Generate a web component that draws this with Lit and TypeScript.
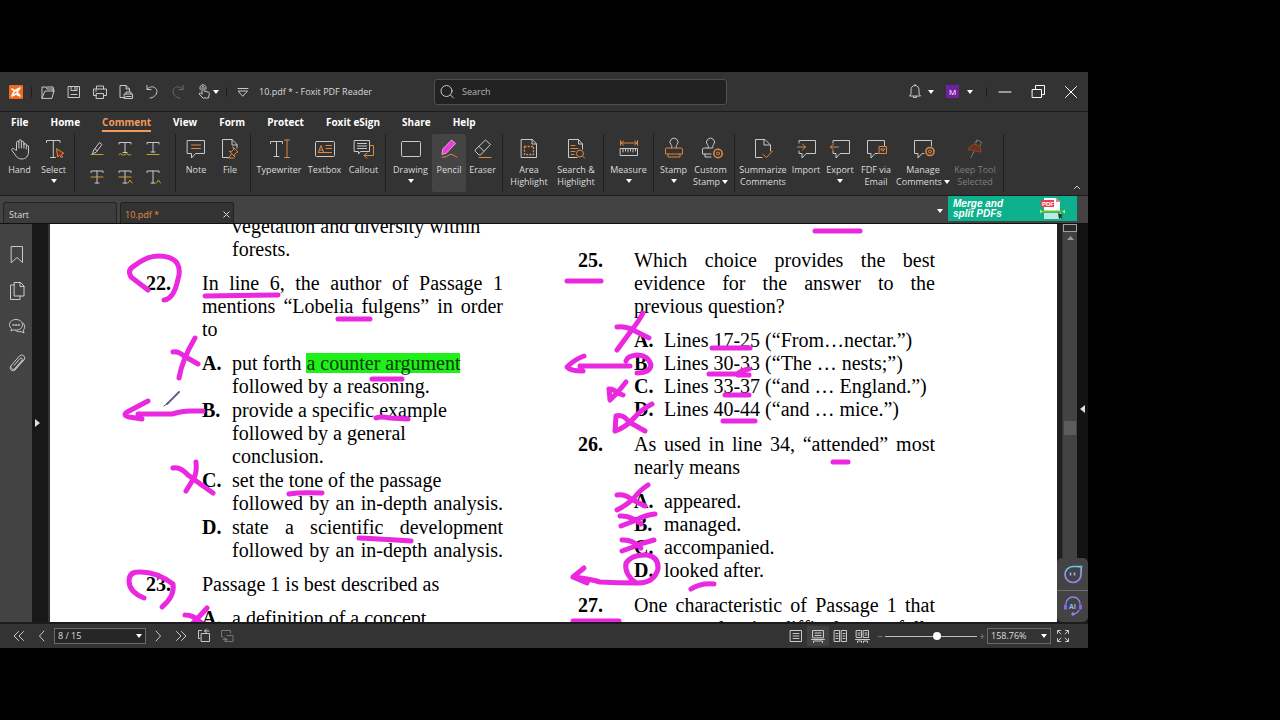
import { LitElement, html, css, svg, nothing } from "lit";
import { customElement } from "lit/decorators.js";

const G = "#c9c9c9";
const O = "#e0873f";
const Y = "#c9a227";

const ICONS: Record<string, any> = {
  logo: svg`<rect x="5" y="5" width="14" height="14" rx="1" fill="#f26b1d" stroke="none"/><path d="M8 16c1-4 3-6 8-8M8 9l3 2 5-3-3 4 3 4-4-2-4 2" stroke="#fff" stroke-width="1.6"/>`,
  open: svg`<path d="M6 18V7h4l1 2h6v2M6 18l3-7h9l-2 7zM11 7h6l1 4"/>`,
  save: svg`<path d="M6.500 6.500h11v11h-11zM9 6.500v4h6v-4M13 7v2.500M9 14.500h6"/>`,
  print: svg`<path d="M8.500 9V6h7v3M8.500 15.500h-3v-6.500h13v6.500h-3M8.500 13.500h7v5h-7zM7.500 11h1"/>`,
  docprint: svg`<path d="M11 17.500H6v-12h6l3.500 3.500v2.500M12 5.500V9h3.500M12 14v-2h5v2M10.500 14h8v4.500h-8zM12 16.500h5"/>`,
  undo: svg`<path d="M7 5.500v4h4M7 9.500c2-2.500 5-3.500 7.500-2 3.500 2 3 6.500 0 8.500-1.500 1.500-3 2-4.500 2"/>`,
  redo: svg`<g stroke="#6b6b6b"><path d="M17 5.500v4h-4M17 9.500c-2-2.500-5-3.500-7.500-2-3.500 2-3 6.500 0 8.500 1.500 1.500 3 2 4.500 2"/></g>`,
  touch: svg`<path d="M10 14V7.500a1 1 0 0 1 2 0V11l4.500 1.200c1 .3 1 1 .8 2l-.8 3.800h-5.500l-4-4c0-1.500 2-1.200 3 0M8.200 9.500a3.200 3.200 0 1 1 5.600 0"/>`,
  ribbon: svg`<path d="M7 8.500h10M7.500 11h9L12 16z"/>`,
  search: svg`<circle cx="11.500" cy="11" r="5.500"/><path d="m15.500 15 3 3"/>`,
  bell: svg`<path d="M12 5.500c-2.800 0-4 2-4 4.500v4l-1.500 2h11L16 14v-4c0-2.500-1.200-4.500-4-4.500zM10.500 16.500v1h3v-1M12 4.500v1"/>`,
  min: svg`<path d="M6 12h12"/>`,
  restore: svg`<path d="M6.500 9.500h9v8h-9zM9.500 9.500v-4h9v9h-3"/>`,
  close: svg`<path d="m6.500 6.500 11 11m0-11-11 11"/>`,
  hand: svg`<path d="M8.500 13V5.500c0-1.700 2.400-1.700 2.400 0V4c0-1.700 2.500-1.700 2.500 0v1.500c0-1.700 2.500-1.700 2.500 0v2.300c0-1.600 2.400-1.600 2.400 0L20.500 9v6c0 4-2.500 7-6.500 7s-5.500-2-7-4.500L4 13.500c-1-2 1-3 2.300-1.500zM10.900 5.500V11M13.400 5v6M15.900 6v5M18.300 8.500V12"/>`,
  select: svg`<path d="M4.500 5.500V3.500H18v2M11.300 3.500v17M8.500 20.500h5"/><path d="m14.500 12 1.200 8 2-1.800 1.600 2.600 1.400-.8-1.500-2.600 2.300-.9z" stroke="${O}" fill="#7a2d14"/>`,
  hl: svg`<path d="m8.500 14.500-1 3 3.500-1 6-8-2.500-2-6 8zM10 13l2.500 1.800"/><path d="M6 18.500h12" stroke="${Y}"/>`,
  squig: svg`<path d="M6 8V6.500h12V8M12 6.500v10M10 16.500h4"/><path d="M6 18.500q1.500-1.500 3 0t3 0 3 0 3 0" stroke="${Y}"/>`,
  under: svg`<path d="M6 8V6.500h12V8M12 6.500v9.500M10 16h4"/><path d="M6 18.500h12" stroke="${Y}"/>`,
  strike: svg`<path d="M6 7.500V6h12v1.500M12 6v12M10 18h4"/><path d="M6 12h12" stroke="${Y}"/>`,
  replace: svg`<path d="M6 7.500V6h12v1.500M12 6v12M10 18h4"/><path d="M6 12h12" stroke="${Y}"/><path d="m15 18 2-3 2 3" stroke="${Y}"/>`,
  insert: svg`<path d="M6 7.500V6h12v1.500M12 6v12M10 18h4"/><path d="m15.500 18 2-3 2 3" stroke="${Y}"/>`,
  note: svg`<path d="M3.500 3.500h17v13h-9l-4 4.500v-4.500h-4z"/><path d="M7.500 8h9M7.500 11.500h9" stroke="${O}"/>`,
  file: svg`<path d="M11 20.500H4.500v-18H14l5 5V11M14 2.500V8h5"/><path d="m15 10 5 5-1.500.5-2 2 .3 2.200-5.500-5.500 2.200.3 2-2zM13.500 17l-3 4M16 21h-5" stroke="${O}"/>`,
  type: svg`<path d="M3.500 6.500v-2h12v2M9.500 4.500v15M7 19.500h5"/><path d="M17.500 3h5M20 3v17.500M17.500 20.500h5" stroke="${O}"/>`,
  textbox: svg`<rect x="2.500" y="4.500" width="19" height="15" rx="1"/><path d="m5.500 15 2.500-6.500 2.500 6.500M6.500 13h3M13 8.500h5.500M13 11.500h5.500M5.500 15.500h13" stroke="${O}"/>`,
  callout: svg`<path d="M2.500 3.500h15v11h-9l-2 2.500v-2.500h-4zM5.500 6.500h9M5.500 9h9M5.500 11.500h9"/><path d="M18 8.500h3.500v10H12m3-2.500-3 2.500 3 2.500" stroke="${O}"/>`,
  drawing: svg`<rect x="2.500" y="4.500" width="19" height="15" rx="1"/>`,
  pencil: svg`<path d="m5 17 .8-5L14.500 3l4 3.500-9 9.500z" fill="#ee3ad8" stroke="#e9a7e2"/><path d="M5 20c5 1 6-2.500 9-2.500s3 2 6 2.500" stroke="${O}"/>`,
  eraser: svg`<path d="m4.500 12.500 10-9.500 5 4.500-10 10.500H8l-3.500-3.500zM8 9.500l5 4.800"/><path d="M8 20.500h12" stroke="${O}"/>`,
  area: svg`<path d="M4.500 2.500h11l4 4.500v13.500h-15zM15 2.500V7h4.500"/><rect x="7.500" y="9.500" width="9" height="8" stroke="${O}" stroke-width="1.400" stroke-linecap="butt" stroke-dasharray="2 1.200"/>`,
  searchhl: svg`<path d="M13 20.500H4.500v-18h10l4 4.500v5M14.500 2.500V7h4"/><path d="M7 8.500h4M7 11.500h7M7 14.500h4M7 17.500h3" stroke="${O}"/><circle cx="16" cy="16.500" r="3.500" stroke="${O}"/><path d="m18.500 19 2 2" stroke="${O}"/>`,
  measure: svg`<path d="M3.500 3.500v5M20.500 3.500v5M4 6h16M6.500 4 4 6l2.500 2M17.500 4 20 6l-2.500 2" stroke="${O}"/><rect x="3.500" y="11.500" width="17" height="7"/><path d="M6 12v3M8.500 12v2M11 12v3M13.500 12v2M16 12v3M18.500 12v2"/>`,
  stamp: svg`<path d="M9.500 11c.5-1.500.5-2-.5-3.200a4 4 0 1 1 6 0c-1 1.200-1 1.700-.5 3.200"/><path d="M4.500 11h15l1 1v5h-17v-5zM6 17v3h12v-3" stroke="${O}"/>`,
  custom: svg`<path d="M9 11c.5-1.500.5-2-.5-3.200a4 4 0 1 1 6 0c-1 1.200-1 1.700-.5 3.200M13 11H4.500l-1 1v5H12M6 17v3h6"/><circle cx="19" cy="16.500" r="4.200" stroke="${O}" stroke-width="1.600"/><circle cx="19" cy="16.500" r="1.500" stroke="${O}"/>`,
  summ: svg`<path d="M11 20.500H4.500v-18H14l5.500 5.500v6M13 2.500v5.500h6"/><path d="m12 17.500 3.500 3 6-6.500" stroke="${O}"/>`,
  imp: svg`<path d="M5 6V3.500h16.500v13H12L8 21v-4.500H5V14"/><path d="M3.500 10h8M8.500 7l3 3-3 3" stroke="${O}"/>`,
  exp: svg`<path d="M5 6V3.500h16.500v13H12L8 21v-4.500H5V14"/><path d="M2.500 10h8M5.500 7l-3 3 3 3" stroke="${O}"/>`,
  fdf: svg`<path d="M14 16.500h-3L7 21v-4.500H3.500v-13h17V9"/><path d="M15.500 9.500h7v7h-7zM17 12h4l-2 2z" stroke="${O}"/>`,
  manage: svg`<path d="M13 16.500h-2L7 21v-4.500H3.500v-13h17V9"/><circle cx="19" cy="14.500" r="4" stroke="${O}" stroke-width="1.600"/><circle cx="19" cy="14.500" r="1.500" stroke="${O}"/>`,
  keep: svg`<path d="M11.500 6.500 14 3l4.500 2-1.500 4M8 20.500l3-6M14 3l-.5 2.500" stroke="#777"/><path d="M5 12.500c2-4 5-5.500 8-5s5.500 3.500 5 7.500l-3.500-.5-2.500-1-2.500-.5z" stroke="#8a4a28" fill="#6a3218"/>`,
  bookmark: svg`<path d="M6.500 3.500h11v16L12 14.500l-5.500 5z"/>`,
  pages: svg`<path d="M9.500 3.500h6l3.500 3.500v10H9.500zM15 3.500V7.500h4M9.500 6h-4v14.500h9.500V17"/>`,
  chat: svg`<path d="M11 4.500c-4 0-6.500 2.300-6.500 5.200 0 1.600.8 3 2 4L6 16l2.500-1.200c4.500 1.200 9-1 9-5.100 0-2.900-2.500-5.200-6.500-5.200zM18 8c3 3 1.500 6 .3 7l.7 3-3-1.500c-2.500.7-4.500 0-5.500-1.200"/><path d="M8 10h1M10.700 10h1M13.400 10h1" stroke-width="1.500"/>`,
  clip: svg`<path d="m17.500 9.500-7 8a2.600 2.600 0 0 1-4-3.500l8-9a3 3 0 0 1 4.500 4M9 14.500l6-7a1.300 1.300 0 0 1 2 1.700L9.500 18M5.500 15.500c-1.500 3 1.500 5.500 4.500 3.500l9-10"/>`,
  first: svg`<path d="m11.500 7.500-4.500 4.500 4.500 4.500M16.500 7.500 12 12l4.500 4.500"/>`,
  prev: svg`<path d="m14 7-4.500 5 4.500 5"/>`,
  next: svg`<path d="m10 7 4.500 5-4.500 5"/>`,
  last: svg`<path d="m7.500 7.500 4.500 4.500-4.500 4.500M12.500 7.500l4.500 4.500-4.500 4.500"/>`,
  back: svg`<path d="M9.500 9.500h8v8h-8zM8 14.500H6.500v-8h3M17 7h-4.500M14.500 5l-2 2 2 2"/>`,
  fwd: svg`<g stroke="#777"><path d="M12 11.500h6v6h-8v-3M8 13H6.500V6.500h9V9M8 15.500h4m-2-2 2 2-2 2"/></g>`,
  single: svg`<path d="M6.500 6.500h11v11h-11zM9 9.500h6M9 12h6M9 14.500h6"/>`,
  cont: svg`<path d="M6.500 13.500v-7h11v7zM9 9h6M9 11.500h6M5.500 15.500h13M7.500 18.500v-1.500h9v1.500"/>`,
  facing: svg`<path d="M6.500 6.500h5v11h-5zM13.500 6.500h5v11h-5zM8 9.500h2M8 12h2M8 14.500h2M15 9.500h2M15 12h2M15 14.500h2"/>`,
  contfacing: svg`<path d="M6.500 6.500h5v7h-5zM13.500 6.500h5v7h-5zM8 9h2M8 11h2M15 9h2M15 11h2M5.500 15.500h14M7.500 18.500v-1.500h4v1.500M13.500 18.500v-1.500h4v1.500"/>`,
  full: svg`<path d="M9.500 6.500h-3v3M6.500 6.500 10 10M14.500 6.500h3v3M17.500 6.500 14 10M9.500 17.500h-3v-3M6.500 17.500 10 14M14.500 17.500h3v-3M17.500 17.500 14 14"/>`,
};

const icon = (name: string) => html`<svg class="icon" viewBox="0 0 24 24" width="24" height="24" aria-hidden="true"
  fill="none" stroke=${G} stroke-width="1" stroke-linejoin="round" stroke-linecap="round">${ICONS[name]}</svg>`;

const caret = html`<svg class="caret" viewBox="0 0 6 4" width="6" height="4" aria-hidden="true"><path d="M0 0h6L3 4z" fill="#fff"/></svg>`;

type Tool = { i: string; l: string[]; w: number; c?: boolean; on?: boolean; off?: boolean };
const GROUPS: (Tool[] | "marks")[] = [
  [{ i: "hand", l: ["Hand"], w: 33 }, { i: "select", l: ["Select"], w: 35, c: true }],
  "marks",
  [{ i: "note", l: ["Note"], w: 34 }, { i: "file", l: ["File"], w: 34 }],
  [{ i: "type", l: ["Typewriter"], w: 50 }, { i: "textbox", l: ["Textbox"], w: 41 }, { i: "callout", l: ["Callout"], w: 37 }],
  [{ i: "drawing", l: ["Drawing"], w: 43, c: true }, { i: "pencil", l: ["Pencil"], w: 34, on: true }, { i: "eraser", l: ["Eraser"], w: 33 }],
  [{ i: "area", l: ["Area", "Highlight"], w: 46 }, { i: "searchhl", l: ["Search &", "Highlight"], w: 48 }],
  [{ i: "measure", l: ["Measure"], w: 43, c: true }],
  [{ i: "stamp", l: ["Stamp"], w: 33, c: true }, { i: "custom", l: ["Custom", "Stamp"], w: 41, c: true }],
  [
    { i: "summ", l: ["Summarize", "Comments"], w: 50 },
    { i: "imp", l: ["Import"], w: 36 },
    { i: "exp", l: ["Export"], w: 32, c: true },
    { i: "fdf", l: ["FDF via", "Email"], w: 40 },
    { i: "manage", l: ["Manage", "Comments"], w: 54, c: true },
    { i: "keep", l: ["Keep Tool", "Selected"], w: 50, off: true },
  ],
];

type Question = { n?: string; stem?: any[]; opts: { k?: string; t: any[] }[] };

const j = (s: string) => ({ j: s });
const LEFT: Question[] = [
  { opts: [{ t: ["vegetation and diversity within", "forests."] }] },
  {
    n: "22.",
    stem: [j("In line 6, the author of Passage 1"), j("mentions “Lobelia fulgens” in order"), "to"],
    opts: [
      { k: "A.", t: [html`put forth <mark>a counter argument</mark>`, "followed by a reasoning."] },
      { k: "B.", t: ["provide a specific example", "followed by a general", "conclusion."] },
      { k: "C.", t: ["set the tone of the passage", j("followed by an in-depth analysis.")] },
      { k: "D.", t: [j("state a scientific development"), j("followed by an in-depth analysis.")] },
    ],
  },
  { n: "23.", stem: ["Passage 1 is best described as"], opts: [{ k: "A.", t: ["a definition of a concept."] }] },
];
const RIGHT: Question[] = [
  { opts: [{ t: ["simple terms."] }] },
  {
    n: "25.",
    stem: [j("Which choice provides the best"), j("evidence for the answer to the"), "previous question?"],
    opts: [
      { k: "A.", t: ["Lines 17-25 (“From…nectar.”)"] },
      { k: "B.", t: ["Lines 30-33 (“The … nests;”)"] },
      { k: "C.", t: ["Lines 33-37 (“and … England.”)"] },
      { k: "D.", t: ["Lines 40-44 (“and … mice.”)"] },
    ],
  },
  {
    n: "26.",
    stem: [j("As used in line 34, “attended” most"), "nearly means"],
    opts: [
      { k: "A.", t: ["appeared."] },
      { k: "B.", t: ["managed."] },
      { k: "C.", t: ["accompanied."] },
      { k: "D.", t: ["looked after."] },
    ],
  },
  { n: "27.", stem: [j("One characteristic of Passage 1 that"), j("can people it difficult to fully")], opts: [] },
];

const INK = [
  "M148 290 L131 277Q127 270 134 266Q147 256 158 256Q172 256 177 263Q181 270 178 279Q174 299 164 300",
  "M205 296L278 295", "M195 338Q182 360 179 378M173 352Q178 351 184 356L198 364",
  "M203 411H190Q182 411 172 414H138M148 401L129 411Q121 415 129 417L142 419",
  "M338 319H370", "M372 379H402", "M376 418Q380 416 390 418L408 419",
  "M815 231H860", "M567 281H601", "M643 313Q639 321 631 331L617 350M617 327Q626 326 633 330L649 338",
  "M712 348H750", "M580 366H630M626 361Q627 356 637 355Q648 355 651 365Q650 373 637 373M584 356Q575 359 567 367Q570 371 583 371",
  "M709 374H737Q742 370 749 369M738 375H749", "M725 395H749", "M723 421H755",
  "M626 382L618 392L610 400L609 389Q614 389 617 393L623 395",
  "M652 404Q642 409 634 418Q625 428 615 431L616 416Q623 414 629 422L645 431",
  "M833 462H848", "M648 485Q640 490 634 498Q627 505 617 510M617 495Q625 494 631 499L645 506",
  "M655 514Q645 515 634 521L621 526M620 516Q630 515 641 524",
  "M654 540Q642 543 633 547L622 551M622 540Q632 539 641 548",
  "M636 583Q624 574 626 563Q632 554 647 555Q659 557 658 569Q654 583 638 583Q618 583 600 582Q590 579 573 577L584 568M573 577L587 583",
  "M691 589Q700 583 714 584", "M573 621H619",
  "M196 462Q197 472 194 478L186 491M173 468Q180 466 188 475Q200 484 213 493",
  "M289 494Q300 492 322 493", "M359 538Q380 539 411 541",
  "M144 598Q129 592 129 581Q129 572 138 572Q156 571 173 584Q175 596 162 607",
  "M207 608Q200 616 188 628M185 615Q194 615 200 622L213 629",
];

const line = (l: any) => (l && l.j ? html`<span class="line full">${l.j}</span>` : html`<span class="line">${l}</span>`);

const question = (q: Question) => html`<section class="q">
  ${q.stem ? html`<div class="stem"><b>${q.n}</b><p>${q.stem.map(line)}</p></div>` : nothing}
  ${q.opts.length
    ? html`<div class="opts">${q.opts.map((o) => html`<div class="opt"><b>${o.k ?? nothing}</b><p>${o.t.map(line)}</p></div>`)}</div>`
    : nothing}
</section>`;

@customElement("app-root")
export class AppRoot extends LitElement {
  static styles = css`
    :host { display: block; min-height: 100vh; background: #000; box-sizing: border-box; padding: 10vh 15% 10vh 0;
      font: 9px/12px "Open Sans", "Noto Sans", sans-serif; color: #dcdcdc; }
    * { box-sizing: border-box; }
    button, input, select { font: inherit; color: inherit; background: none; border: 0; margin: 0; padding: 0; border-radius: 0; outline: none; }
    svg { display: block; flex: none; }
    .window { display: flex; flex-direction: column; height: 80vh; background: #333; overflow: hidden; }
    .title { display: grid; grid-template-columns: 434fr 293fr 361fr; align-items: center; height: 40px; border-bottom: 1px solid #1c1c1c; flex: none; }
    .quick { display: flex; align-items: center; padding-left: 4px; white-space: nowrap; }
    .quick > .caret { margin: 0 4px 0 -4px; }
    .ib { display: flex; align-items: center; justify-content: center; width: 26px; height: 26px; }
    .bar { width: 1px; height: 10px; background: #1c1c1c; margin: 0 3px; flex: none; }
    .bar.sysbar { margin: 0 1px 0 13px; }
    .name { padding-left: 3px; }
    .search { display: flex; align-items: center; height: 26px; border: 1px solid #505050; border-radius: 3px; background: #222; }
    .search input { flex: 1; min-width: 0; padding-left: 3px; }
    .search input::placeholder { color: #b4b4b4; opacity: 1; }
    .sys { display: flex; align-items: center; justify-content: flex-end; padding-right: 1px; }
    .avatar { width: 13px; height: 13px; background: #7121a0; color: #fff; font-size: 8px; line-height: 13px; text-align: center; margin: 0 8px 0 12px; }
    .wide { width: 33px; }
    .wide svg { stroke: #fff; }
    .menu { display: flex; gap: 22px; height: 22px; padding: 0 0 0 11px; align-items: center; flex: none; font-size: 10px; font-weight: 700; color: #fff; }
    .menu button { height: 18px; line-height: 16px; border-bottom: 2px solid transparent; white-space: nowrap; }
    .menu button.on { color: #f19a5b; border-color: #f19a5b; }
    .ribbon { display: flex; height: 62px; padding-bottom: 3px; border-bottom: 1px solid #1c1c1c; flex: none; }
    .group { display: flex; padding: 0 3px; border-right: 1px solid #1f1f1f; }
    .marks { display: grid; grid-template-columns: repeat(3, 28px); padding: 0 8px; }
    .marks button { display: flex; align-items: center; justify-content: center; height: 28px; }
    .tool { display: flex; flex-direction: column; align-items: center; padding-top: 3px; line-height: 12px; white-space: nowrap; border-radius: 2px; }
    .tool svg.icon { margin-bottom: 3px; }
    .tool span { display: flex; align-items: center; gap: 2px; }
    .tool > .caret { margin-top: 3px; }
    .tool.on { background: #444; }
    .tool:disabled { color: #7c7c7c; }
    .fold { margin: auto 8px 3px auto; }
    .tabs { display: flex; height: 28px; background: #434343; border-bottom: 1px solid #111; padding: 0 11px 0 3px; flex: none; }
    .tab { display: flex; align-items: center; justify-content: space-between; width: 114px; height: 21px; margin: 6px 3px 0 0; padding: 3px 3px 0 5px;
      border: 1px solid #222; border-bottom: 0; border-radius: 3px 3px 0 0; background: #3c3c3c; }
    .tab.on { background: #333; color: #ea8a42; padding-left: 4px; }
    .tabs > .caret { margin: 13px 5px 0 auto; }
    .ad { display: flex; justify-content: space-between; align-items: center; width: 129px; height: 25px; background: #0cb08c; padding: 0 12px 0 5px; color: #fff; text-decoration: none;
      font: italic 700 10px/10px "Liberation Sans", Arial, sans-serif; }
    .work { display: flex; flex: 1; min-height: 0; background: #181818; position: relative; }
    .side { width: 32px; background: #434343; display: flex; flex-direction: column; align-items: center; padding: 19px 0 0 2px; gap: 12px; flex: none; }
    .gut { width: 18px; border-right: 2px solid #333; display: flex; align-items: center; padding-left: 3px; flex: none; }
    .page { flex: 1; background: #fff; position: relative; overflow: hidden; display: flex; padding-left: 96px; gap: 75px;
      color: #000; font: 20px/23px "Liberation Serif", "Times New Roman", serif; }
    .col { width: 357px; flex: none; display: flex; flex-direction: column; gap: 11px; margin-top: -9px; white-space: nowrap; }
    .col.r { margin-top: -23px; }
    .col.r .q:first-child { margin-bottom: 14px; }
    .q { display: flex; flex-direction: column; gap: 11px; }
    .stem { display: grid; grid-template-columns: 56px 1fr; }
    .opts { display: flex; flex-direction: column; gap: 1px; padding-left: 56px; }
    .r .opts { gap: 0; }
    .r .q + .q .opts { margin-bottom: 1px; }
    .opt { display: grid; grid-template-columns: 30px 1fr; }
    p { margin: 0; }
    .line { display: block; }
    .full { text-align-last: justify; }
    mark { background: #1ff01a; color: #0a3a08; display: inline-block; line-height: 20px; }
    .ink { position: absolute; left: 0; top: 0; }
    .edge { width: 6px; border-right: 1px solid #333; background: #202020; flex: none; }
    .scroll { width: 14px; background: #434343; display: flex; flex-direction: column; align-items: center; flex: none; }
    .split { width: 14px; height: 8px; border: 1px solid #a0a0a0; background: #2a2a2a; }
    .up { margin-top: 4px; }
    .thumb { width: 12px; height: 14px; margin-top: 181px; background: #5c5c5c; }
    .rail { width: 11px; background: #131313; display: flex; align-items: center; padding-left: 3px; flex: none; }
    .rail svg { margin-bottom: 29px; }
    .assist { position: absolute; right: 0; bottom: 0; width: 31px; height: 64px; background: #434343; border-radius: 5px; display: flex; flex-direction: column; }
    .assist button { flex: 1; display: flex; align-items: center; justify-content: center; }
    .assist button + button { border-top: 1px solid #707070; }
    .status { display: flex; align-items: center; height: 26px; border-top: 2px solid #1c1c1c; padding: 0 14px 0 7px; flex: none; }
    .status .ib { width: 23px; height: 22px; }
    .status .views .ib { width: 22px; height: 20px; }
    .status .act { background: #424242; }
    .combo { display: flex; align-items: center; position: relative; height: 16px; border: 1px solid #6a6a6a; background: #262626; margin: 0 0 0 1px; }
    .combo select { appearance: none; width: 90px; height: 14px; padding: 0 14px 0 3px; }
    .combo .caret { position: absolute; right: 3px; top: 5px; pointer-events: none; }
    .combo.z { background: #333; margin-left: 2px; }
    .combo.z select { width: 62px; }
    .views { display: flex; margin: 0 4px 0 auto; }
    .zoom { appearance: none; width: 92px; height: 12px; margin: 0 2px; background: linear-gradient(#bdbdbd, #bdbdbd) center / 100% 1px no-repeat; }
    .zoom::-webkit-slider-thumb { appearance: none; width: 8px; height: 8px; border-radius: 50%; background: #fff; }
    .step { width: 6px; color: #8a8a8a; font-size: 10px; text-align: center; }
  `;

  private ib(name: string, label: string, cls = "") {
    return html`<button class="ib ${cls}" aria-label=${label}>${icon(name)}</button>`;
  }

  private tool(t: Tool) {
    const two = t.l.length > 1;
    return html`<button class="tool ${t.on ? "on" : ""}" style="width:${t.w}px" ?disabled=${!!t.off}>
      ${icon(t.i)}<span>${t.l[0]}</span>${two ? html`<span>${t.l[1]}${t.c ? caret : nothing}</span>` : t.c ? caret : nothing}
    </button>`;
  }

  render() {
    return html`<main class="window">
      <header class="title">
        <div class="quick">
          ${icon("logo")}<i class="bar"></i>
          ${this.ib("open", "Open")}${this.ib("save", "Save")}${this.ib("print", "Print")}${this.ib("docprint", "Print page")}
          ${this.ib("undo", "Undo")}${this.ib("redo", "Redo")}${this.ib("touch", "Touch mode")}${caret}
          <i class="bar"></i>${this.ib("ribbon", "Customize")}<span class="name">10.pdf * - Foxit PDF Reader</span>
        </div>
        <label class="search">${icon("search")}<input type="search" aria-label="Search" placeholder="Search" /></label>
        <div class="sys">
          ${this.ib("bell", "Notifications")}${caret}<span class="avatar">M</span>${caret}
          <i class="bar sysbar"></i>
          ${this.ib("min", "Minimize", "wide")}${this.ib("restore", "Restore", "wide")}${this.ib("close", "Close", "wide")}
        </div>
      </header>
      <nav class="menu">
        ${["File", "Home", "Comment", "View", "Form", "Protect", "Foxit eSign", "Share", "Help"].map(
          (m) => html`<button class=${m === "Comment" ? "on" : ""}>${m}</button>`
        )}
      </nav>
      <div class="ribbon">
        ${GROUPS.map((g) =>
          g === "marks"
            ? html`<div class="group marks">${["hl", "squig", "under", "strike", "replace", "insert"].map((n) => html`<button aria-label=${n}>${icon(n)}</button>`)}</div>`
            : html`<div class="group">${g.map((t) => this.tool(t))}</div>`
        )}
        <svg class="fold" width="6" height="4" viewBox="0 0 6 4"><path d="M0 4l3-3 3 3" fill="none" stroke="#ccc"/></svg>
      </div>
      <div class="tabs">
        <div class="tab">Start</div>
        <div class="tab on">10.pdf *<svg width="7" height="7" viewBox="0 0 7 7"><path d="m.5.5 6 6m0-6-6 6" stroke="#ddd"/></svg></div>
        ${caret}
        <a class="ad" href="#"><span>Merge and<br />split PDFs</span>
          <svg width="26" height="23" viewBox="0 0 26 23">
            <path d="M5 1h12l4 4v9H5z" fill="#fff"/><path d="M17 1l4 4h-4z" fill="#f27d7d"/>
            <path d="M5 16h17v6H5z" fill="#bdeadf"/><path d="M4 14.500h18" stroke="#63c23b" stroke-width="2"/>
            <path d="M1 12.500l3 2-3 2zM26 12.500l-3 2 3 2z" fill="#c7ef3f"/><rect x="2" y="3" width="13" height="7" fill="#e8414d"/>
            <text x="3" y="9" font-family="Liberation Sans" font-size="6" font-style="normal" font-weight="700" fill="#fff">PDF</text>
            <path d="M19 16l5 2-2 1 2 3-2-1-2 1z" fill="#173a35"/>
          </svg></a>
      </div>
      <div class="work">
        <aside class="side">${icon("bookmark")}${icon("pages")}${icon("chat")}${icon("clip")}</aside>
        <div class="gut"><svg width="5" height="8" viewBox="0 0 5 8"><path d="M0 0l5 4-5 4z" fill="#ddd"/></svg></div>
        <article class="page">
          <div class="col">${LEFT.map(question)}</div>
          <div class="col r">${RIGHT.map(question)}</div>
          <svg class="ink" width="1007" height="400" viewBox="50 224 1007 400" fill="none" stroke="#ea28df" stroke-width="5" stroke-linecap="round" stroke-linejoin="round">
            ${INK.map((d) => svg`<path d=${d}/>`)}
            <path d="M167 404l12-12" stroke="#6f5d8c" stroke-width="2"/><path d="M164 406l4-3" stroke="#555" stroke-width="1"/>
          </svg>
        </article>
        <div class="edge"></div>
        <div class="scroll"><i class="split"></i><svg class="up" width="7" height="4" viewBox="0 0 7 4"><path d="M0 4l3.500-4L7 4z" fill="#999"/></svg><i class="thumb"></i></div>
        <div class="rail"><svg width="5" height="8" viewBox="0 0 5 8"><path d="M5 0L0 4l5 4z" fill="#ddd"/></svg></div>
        <div class="assist">
          <button aria-label="Chat assistant"><svg width="20" height="20" viewBox="0 0 20 20" fill="none" stroke="url(#a)" stroke-width="1.600">
            <defs><linearGradient id="a" x1="0" y1="0" x2="0" y2="1"><stop offset="0" stop-color="#6cc7ee"/><stop offset="1" stop-color="#a779f0"/></linearGradient></defs>
            <path d="M18.500 2.500c-.5 3-.5 5-.5 8a8 8 0 1 1-8-8c3 0 5.500.3 8.500 0z"/><path d="M7.500 8.500v3M11.500 8.500v3" stroke="#8fb0f2"/></svg></button>
          <button aria-label="AI support"><svg width="20" height="20" viewBox="0 0 20 20" fill="none" stroke="#8d86ea" stroke-width="1.400">
            <path d="M3 8a7 7 0 0 1 14 0M16 14q-2 4-6 4"/><path d="M2.500 8.500v5M17.500 8.500v5" stroke="#8565ee" stroke-width="3"/><circle cx="10" cy="18" r="1" fill="#9b6cf0"/>
            <text x="6" y="13" font-size="7" font-weight="700" fill="#8db9f0" stroke="none">AI</text></svg></button>
        </div>
      </div>
      <footer class="status">
        ${this.ib("first", "First page")}${this.ib("prev", "Previous page")}
        <span class="combo"><select aria-label="Page"><option>8 / 15</option></select>${caret}</span>
        ${this.ib("next", "Next page")}${this.ib("last", "Last page")}${this.ib("back", "Previous view")}${this.ib("fwd", "Next view")}
        <span class="views">${this.ib("single", "Single page")}${this.ib("cont", "Continuous", "act")}${this.ib("facing", "Facing")}${this.ib("contfacing", "Continuous facing")}</span>
        <button class="step" aria-label="Zoom out">−</button><input class="zoom" type="range" aria-label="Zoom" value="57" /><button class="step" aria-label="Zoom in">+</button>
        <span class="combo z"><select aria-label="Zoom level"><option>158.76%</option></select>${caret}</span>
        ${this.ib("full", "Full screen")}
      </footer>
    </main>`;
  }
}
